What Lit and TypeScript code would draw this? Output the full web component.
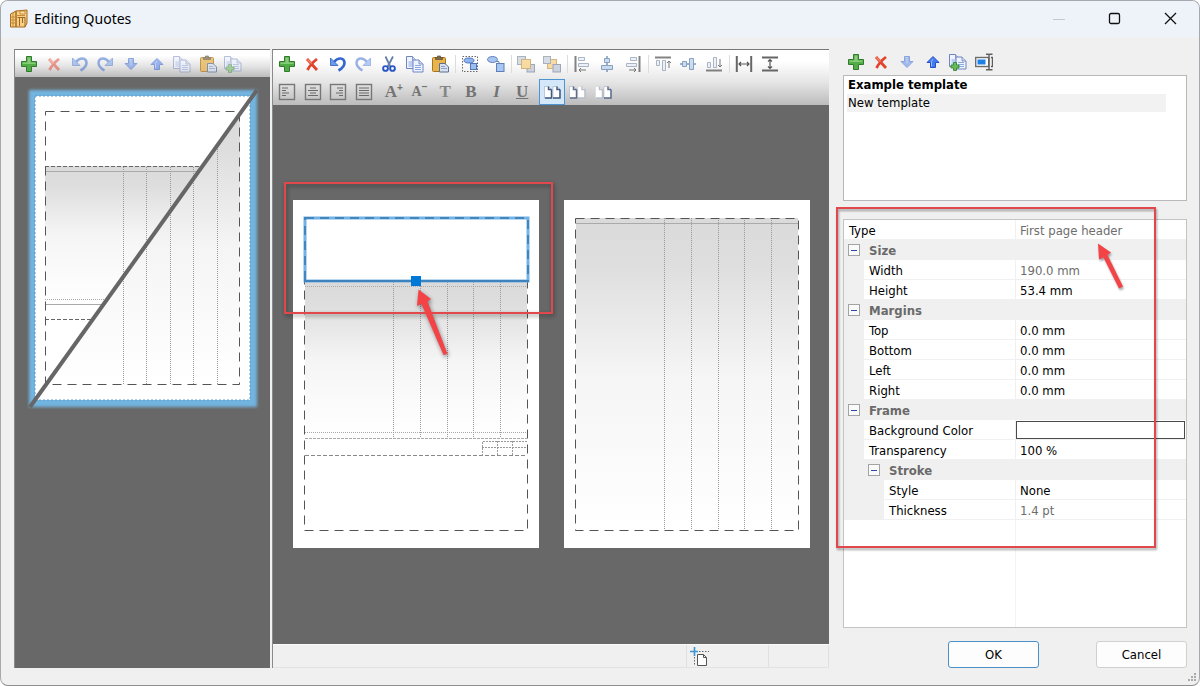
import { LitElement, html, css, svg, nothing } from "lit";
import { customElement, property, state } from "lit/decorators.js";
import { classMap } from "lit/directives/class-map.js";

const page = (x: number, y: number) => svg`
  <path d="M${x} ${y}h6l4 4v8h-10z" fill="#eef3ff" stroke="#6f86bd"/>
  <path d="M${x + 6} ${y}v4h4" fill="#c9d6f5" stroke="#6f86bd" stroke-width=".8"/>
  <path d="M${x + 2} ${y + 5.5}h6M${x + 2} ${y + 7.5}h6M${x + 2} ${y + 9.5}h6" stroke="#7f9fe0" stroke-width=".9"/>`;

const pagePair = (left: string, right: string) => svg`
  <path d="M1.500 3.500h4l3 3V15h-7z" fill="#fff" stroke="${left}" stroke-opacity=".35" stroke-width=".8"/>
  <path d="M2 15h6.500V6.500M5.500 3.500v3h3" fill="none" stroke="${left}" stroke-width="1.500"/>
  <path d="M10 3.500h4l3 3V15h-7z" fill="#fff" stroke="${right}" stroke-opacity=".35" stroke-width=".8"/>
  <path d="M10 15h7V6.500M14 3.500v3h3" fill="none" stroke="${right}" stroke-width="1.500"/>`;

const textBlock = (lines: string) => svg`
  <rect x="1.500" y="1.500" width="15" height="15" fill="none" stroke="#777" stroke-width="1.400"/>
  <path d="${lines}" stroke="#6a6a6a" stroke-width="1.200"/>`;

const icons: Record<string, unknown> = {
  add: svg`<path d="M6.500 1.500h5v5h5v5h-5v5h-5v-5h-5v-5h5z" fill="#52ad47" stroke="#2f7a2d"/><path d="M7.500 2.500h3v5h5v1.500h-13V7.500h5z" fill="#9bd78b" opacity=".75"/>`,
  remove: svg`<path d="M4 4l10 11M14 4C10 7 7 10 4.500 15" fill="none" stroke="#e2432c" stroke-width="2.800"/><path d="M4.500 4.500l4 4" stroke="#f58a72" stroke-width="1.200"/>`,
  undo: svg`<path d="M5 7C9 2 15 2.500 15.500 7.500c.2 3.500-2.500 6-6 8" fill="none" stroke="#3568cf" stroke-width="2.600"/><path d="M1.500 3v7.500h7.500z" fill="#6d9bea" stroke="#2d5dc0" stroke-width=".8"/>`,
  redo: svg`<path d="M13 7C9 2 3 2.500 2.500 7.500c-.2 3.500 2.500 6 6 8" fill="none" stroke="#3568cf" stroke-width="2.400"/><path d="M16.500 3v7.500h-7.500z" fill="#6d9bea" stroke="#2d5dc0" stroke-width=".8"/>`,
  down: svg`<path d="M6.500 3.500h5v5h3.500L9 14.500 3 8.500h3.500z" fill="#5585ea" stroke="#2b57c8"/><path d="M7.500 4.500h1.500v6" fill="none" stroke="#9dbcff"/>`,
  up: svg`<path d="M6.500 14.500h5v-5h3.500L9 3.500 3 9.500h3.500z" fill="#4479f0" stroke="#2450c4"/><path d="M7.500 13.500v-5L9 6" fill="none" stroke="#9dbcff"/>`,
  cut: svg`<path d="M5.500 1.500l5 10.500M13 1.500L7.500 12" stroke="#6880a8" stroke-width="1.800"/><circle cx="5.500" cy="13.500" r="2.400" fill="none" stroke="#2956c5" stroke-width="1.900"/><circle cx="12.500" cy="13.500" r="2.400" fill="none" stroke="#2956c5" stroke-width="1.900"/>`,
  copy: svg`${page(0.5, 1.5)}${page(7, 5)}`,
  paste: svg`<rect x="1.500" y="2.500" width="13" height="14" rx="1" fill="#e9b44c" stroke="#a87520"/><path d="M4.500 4.500V2.500h2V1h3v1.500h2v2z" fill="#7d6a4b" stroke="#5d4d33" stroke-width=".7"/><path d="M8.500 8.500h5.500l3.500 3.500v5h-9z" fill="#d7e0ef" stroke="#5d6f93"/><path d="M10 11.500h4M10 13.500h6" stroke="#8ea3cb"/>`,
  copyAdd: svg`${page(0.5, 1.5)}${page(7, 4)}<path d="M4.500 9.500h3v2.500H10v3H7.500v2.500h-3V15H2v-3h2.500z" fill="#67bd58" stroke="#2d8030" stroke-width=".8"/>`,
  rename: svg`<rect x=".700" y="4.500" width="13" height="9" fill="#fff" stroke="#6c6c6c" stroke-width="1.400"/><rect x="2.500" y="6.500" width="8" height="5" fill="#1c80e8"/><path d="M11 1.200h2.200q.8 0 .8 1v13.600q0 1-.8 1H11M17.500 1.200h-2.700q-.8 0-.8 1M17.500 16.800h-2.700q-.8 0-.8-1M16 4.500h1.500v9H16" fill="none" stroke="#5f5f5f" stroke-width="1.400"/>`,
  group: svg`<rect x="1.500" y="1.500" width="15" height="15" fill="none" stroke="#666" stroke-dasharray="1.500 1.500"/><ellipse cx="8" cy="5.500" rx="5" ry="2.500" fill="#8fb3ee" stroke="#5077b9"/><rect x="9.500" y="8.500" width="6" height="6" fill="#9dbdf0" stroke="#5077b9"/>`,
  ungroup: svg`<ellipse cx="5.500" cy="4.500" rx="5" ry="3" fill="#a9c6f3" stroke="#5c7fb9"/><path d="M9 6.500h3v2" fill="none" stroke="#6d87b0"/><rect x="9.500" y="8.500" width="7.500" height="8" fill="#a9c6f3" stroke="#5c7fb9"/>`,
  front: svg`<rect x=".500" y="1.500" width="8" height="8" fill="#c9d0dc" stroke="#8b94a5"/><rect x="10" y="9.500" width="7.500" height="7.500" fill="#bcc6d8" stroke="#7e8899"/><rect x="4.500" y="4.500" width="9" height="9" fill="#f8cf7f" stroke="#c09a54"/>`,
  back: svg`<rect x="4.500" y="4.500" width="9" height="9" fill="#f8cf7f" stroke="#c09a54"/><rect x=".500" y="1.500" width="7" height="7" fill="#c9d0dc" stroke="#8b94a5"/><rect x="10" y="9.500" width="7.500" height="7.500" fill="#bcc6d8" stroke="#7e8899"/>`,
  alignLeft: svg`<path d="M2.500 1v16" stroke="#555" stroke-width="2"/><path d="M5.500 2.500h6v3h-6zM5.500 8.500h10v3h-10z" fill="#e9eef6" stroke="#8a99b1"/><path d="M13 15H6M8 13l-2 2 2 2" fill="none" stroke="#444"/>`,
  alignCenter: svg`<path d="M9 1v16" stroke="#4c6f9f" stroke-width="1.500"/><path d="M6.500 3.500h5v4h-5zM3.500 10.500h11v4h-11z" fill="#b9d0ee" stroke="#5c7fae"/>`,
  alignRight: svg`<path d="M15.500 1v16" stroke="#555" stroke-width="2"/><path d="M6.500 2.500h6v3h-6zM2.500 8.500h10v3h-10z" fill="#e9eef6" stroke="#8a99b1"/><path d="M5 15h7M10 13l2 2-2 2" fill="none" stroke="#444"/>`,
  alignTop: svg`<path d="M1 2.500h16" stroke="#555" stroke-width="2"/><path d="M2.500 5.500h3v5h-3zM8.500 5.500h3v10h-3z" fill="#e9eef6" stroke="#8a99b1"/><path d="M15 13V6M13 8l2-2 2 2" fill="none" stroke="#444"/>`,
  alignMiddle: svg`<path d="M1 9h16" stroke="#4c6f9f" stroke-width="1.500"/><path d="M3.500 6.500h4v5h-4zM10.500 3.500h4v11h-4z" fill="#b9d0ee" stroke="#5c7fae"/>`,
  alignBottom: svg`<path d="M1 15.500h16" stroke="#555" stroke-width="2"/><path d="M2.500 7.500h3v5h-3zM8.500 2.500h3v10h-3z" fill="#e9eef6" stroke="#8a99b1"/><path d="M15 4v8M13 10l2 2 2-2" fill="none" stroke="#444"/>`,
  sameWidth: svg`<path d="M1.800 1v16M16.200 1v16" stroke="#666" stroke-width="2"/><path d="M4 9h10M6 7L4 9l2 2M12 7L14 9l-2 2" fill="none" stroke="#555" stroke-width="1.200"/>`,
  sameHeight: svg`<path d="M1 2.500h16M1 15.500h16" stroke="#666" stroke-width="2"/><path d="M9 4.500v9M7 6.500L9 4.500l2 2M7 11.500l2 2 2-2" fill="none" stroke="#555" stroke-width="1.200"/>`,
  textLeft: textBlock("M4 5h6M4 7.500h4M4 10h7M4 12.500h4"),
  textCenter: textBlock("M6 5h6M4 7.500h10M6 10h6M4 12.500h10"),
  textRight: textBlock("M8 5h6M10 7.500h4M7 10h7M10 12.500h4"),
  textJustify: textBlock("M4 5h10M4 7.500h10M4 10h10M4 12.500h10"),
  pagesBoth: pagePair("#43597f", "#43597f"),
  pagesFirst: pagePair("#5b6c8c", "#b9bec8"),
  pagesNext: pagePair("#b9bec8", "#5b6c8c"),
};

const icon = (name: string) => html`<svg class="icon" viewBox="0 0 18 18" aria-hidden="true">${icons[name]}</svg>`;

type Tool = { icon?: string; glyph?: string; sup?: string; style?: string; label: string; faded?: boolean; soft?: boolean };

const iconStyles = css`
  :host { display: block; }
  .icon { width: 18px; height: 18px; display: block; }
  button { font: inherit; color: inherit; margin: 0; padding: 0; border: 0; background: none; }
`;

@customElement("tool-group")
class ToolGroup extends LitElement {
  @property({ attribute: false }) tools: Tool[] = [];
  @property({ attribute: false }) active = "";
  static styles = [iconStyles, css`
    .group { display: grid; grid-auto-flow: column; grid-auto-columns: minmax(0, 1fr); align-items: center; height: 100%; }
    button { height: 26px; display: flex; align-items: center; justify-content: center; }
    .faded .icon { opacity: .5; }
    .soft .icon { opacity: .72; }
    .active { background: #d4e8fa; box-shadow: inset 0 0 0 1px #4c94d2; }
    .glyph { font: bold 17px/20px "Liberation Serif", serif; color: #737373; }
    .small { font-size: 14px; }
    .light { color: #868686; }
    .italic { font-style: italic; }
    .under { text-decoration: underline; }
    sup { font: bold 10px/8px "Liberation Sans", sans-serif; vertical-align: 6px; }
  `];
  render() {
    return html`<div class="group" role="group">${this.tools.map((t) => html`
      <button type="button" aria-label=${t.label} class=${classMap({ faded: !!t.faded, soft: !!t.soft, active: this.active === t.label })}>
        ${t.icon ? icon(t.icon) : html`<span class="glyph ${t.style ?? ""}">${t.glyph}${t.sup ? html`<sup>${t.sup}</sup>` : nothing}</span>`}
      </button>`)}</div>`;
  }
}

const columns = (xs: number[], y1: number, y2: number) =>
  xs.map((x) => svg`<path d="M${x} ${y1}V${y2}" stroke="#999" stroke-width="1" stroke-dasharray="1 1"/>`);

const fade = (id: string) => svg`
  <linearGradient id=${id} x1="0" y1="0" x2="0" y2="1">
    <stop offset="0" stop-color="#dadada"/><stop offset=".15" stop-color="#dedede"/>
    <stop offset=".5" stop-color="#f5f5f5"/><stop offset="1" stop-color="#fff"/>
  </linearGradient>`;

@customElement("template-thumbnail")
class TemplateThumbnail extends LitElement {
  static styles = css`
    :host { display: block; }
    svg { display: block; width: 232px; height: 322px; }
  `;
  render() {
    const xs = [96.5, 119.5, 143.5, 166.5, 190.5];
    return html`<svg viewBox="0 0 232 322" role="img" aria-label="Template thumbnail">
      <defs>
        ${fade("fade")}
        <filter id="soft"><feGaussianBlur stdDeviation="1.500"/></filter>
        <clipPath id="upper"><path d="M0 0H232L0 322z"/></clipPath>
        <clipPath id="lower"><path d="M232 0V322H0z"/></clipPath>
      </defs>
      <rect x="2" y="3" width="228" height="317" fill="#72b4e0" filter="url(#soft)"/>
      <rect x="8" y="9" width="215" height="304" fill="#fff" stroke="#5f9ac8" stroke-dasharray="2 2"/>
      <g clip-path="url(#upper)">
        <rect x="18" y="79" width="195" height="138" fill="url(#fade)"/>
        <path d="M18 79.500H213M18 232.500H213" stroke="#666" stroke-dasharray="4 2"/>
        <path d="M18 84.500H213M18 217.500H213" stroke="#aaa"/>
        <path d="M18 212.500H213" stroke="#aaa" stroke-dasharray="1 1"/>
        ${columns(xs, 80, 217)}
      </g>
      <g clip-path="url(#lower)">
        <rect x="18" y="24" width="195" height="274" fill="url(#fade)"/>
        ${columns(xs, 24, 298)}
      </g>
      <rect x="18.500" y="24.500" width="194" height="273" fill="none" stroke="#555" stroke-dasharray="9 6"/>
      <path d="M230 3L3 320" stroke="#666" stroke-width="4"/>
    </svg>`;
  }
}

@customElement("page-canvas")
class PageCanvas extends LitElement {
  static styles = css`
    :host { display: flex; align-items: center; justify-content: center; gap: 25px; padding-bottom: 2px; background: #686868; }
    .sheet { position: relative; }
    svg { display: block; }
    .paper { width: 246px; height: 348px; }
    .callout { position: absolute; left: -14px; top: -24px; width: 280px; height: 190px; overflow: visible; filter: drop-shadow(1px 2px 2px rgba(0,0,0,.45)); pointer-events: none; }
  `;
  render() {
    const xs = [100.5, 127.5, 154.5, 180.5, 207.5];
    return html`
      <div class="sheet">
        <svg class="paper" viewBox="0 0 246 348" role="img" aria-label="First page">
          <defs>${fade("fade")}</defs>
          <rect width="246" height="348" fill="#fff"/>
          <rect x="12" y="82" width="222" height="156" fill="url(#fade)"/>
          <path d="M12 86.500H234M12 232.500H234" stroke="#aaa" stroke-dasharray="1 1"/>
          <path d="M12 238.500H234" stroke="#aaa" stroke-dasharray="3 1"/>
          <path d="M12 255.500H234" stroke="#888" stroke-dasharray="4 2"/>
          ${columns(xs, 82, 238)}
          <path d="M189.500 256V241.500H234M204.500 241V256M219.500 241V256M189 247.500H234" fill="none" stroke="#999" stroke-dasharray="2 1"/>
          <rect x="11.500" y="17.500" width="223" height="313" fill="none" stroke="#555" stroke-dasharray="9 6"/>
          <rect x="12" y="18" width="223" height="63" fill="#fff" stroke="#72b2e4" stroke-width="3"/>
          <rect x="12" y="18" width="223" height="63" fill="none" stroke="#4286bd" stroke-width="2" stroke-dasharray="9 6"/>
          <path d="M11 81H236" stroke="#3e83bd" stroke-width="2"/>
          <rect x="118" y="76" width="10" height="10" fill="#0078d7"/>
        </svg>
        <svg class="callout" viewBox="0 0 280 190" aria-hidden="true">
          <rect x="6" y="7" width="267" height="130" fill="none" stroke="#e0484b" stroke-width="2"/>
          <path d="M139.500 113.500L138 130L142.500 128L164.500 179L168.500 178L148.500 125.500L152 123z" fill="#f44346"/>
        </svg>
      </div>
      <svg class="paper" viewBox="0 0 246 348" role="img" aria-label="Following page">
        <defs>${fade("fade2")}</defs>
        <rect width="246" height="348" fill="#fff"/>
        <rect x="12" y="18" width="222" height="312" fill="url(#fade2)"/>
        <path d="M12 23.500H234" stroke="#aaa"/>
        ${columns(xs, 18, 330)}
        <rect x="11.500" y="18.500" width="223" height="312" fill="none" stroke="#555" stroke-dasharray="9 6"/>
      </svg>`;
  }
}

type Row = { name: string; value?: string; level: number; section?: boolean; readonly?: boolean; swatch?: boolean };

const rows: Row[] = [
  { name: "Type", value: "First page header", level: 0, readonly: true },
  { name: "Size", level: 1, section: true },
  { name: "Width", value: "190.0 mm", level: 1, readonly: true },
  { name: "Height", value: "53.4 mm", level: 1 },
  { name: "Margins", level: 1, section: true },
  { name: "Top", value: "0.0 mm", level: 1 },
  { name: "Bottom", value: "0.0 mm", level: 1 },
  { name: "Left", value: "0.0 mm", level: 1 },
  { name: "Right", value: "0.0 mm", level: 1 },
  { name: "Frame", level: 1, section: true },
  { name: "Background Color", level: 1, swatch: true },
  { name: "Transparency", value: "100 %", level: 1 },
  { name: "Stroke", level: 2, section: true },
  { name: "Style", value: "None", level: 2 },
  { name: "Thickness", value: "1.4 pt", level: 2, readonly: true },
];

@customElement("property-grid")
class PropertyGrid extends LitElement {
  static styles = css`
    :host { display: flex; flex-direction: column; background: #fff; border: 1px solid #c4c4c4; position: relative; line-height: 17px; }
    table { width: 100%; border-collapse: separate; border-spacing: 0; table-layout: fixed; }
    .names { width: 172px; }
    th, td { height: 20px; padding: 0; box-sizing: border-box; text-align: left; font-weight: normal; white-space: nowrap; }
    .name { display: flex; height: 20px; box-sizing: border-box; }
    .gutter { flex: none; width: 20px; background: #f0f0f0; display: flex; align-items: center; justify-content: center; }
    .label { flex: 1; padding: 2px 0 0 5px; border-bottom: 1px solid #f0f0f0; border-right: 1px solid #f0f0f0; }
    td { padding: 2px 0 0 4px; border-bottom: 1px solid #f0f0f0; }
    .section { background: #f0f0f0; }
    .section .label { font-weight: bold; color: #6a6a6a; }
    .readonly { color: #6d6d6d; }
    .swatch-cell { padding: 0 1px 0 0; }
    .swatch { display: block; width: 100%; height: 18px; padding: 0; background: #fff; border: 1px solid #4a4a4a; border-radius: 0; }
    .toggle { width: 12px; height: 12px; padding: 0; border: 1px solid #a3a3a3; border-radius: 0; background: #fafafa; display: flex; align-items: center; justify-content: center; }
    .bar { width: 6px; height: 1px; background: #2a4ba0; }
    .rest { flex: 1; width: 171px; border-right: 1px solid #f4f4f4; }
    .callout { position: absolute; left: -12px; top: -18px; width: 330px; height: 352px; filter: drop-shadow(1px 2px 1px rgba(0,0,0,.35)); pointer-events: none; }
  `;
  render() {
    return html`
      <table aria-label="Properties">
        <colgroup><col class="names"><col></colgroup>
        <tbody>${rows.map((r) => r.section
          ? html`<tr class="section"><th colspan="2" scope="rowgroup"><div class="name">
              ${r.level > 1 ? html`<span class="gutter"></span>` : nothing}
              <span class="gutter"><button class="toggle" type="button" aria-label="Collapse ${r.name}" aria-expanded="true"><span class="bar"></span></button></span>
              <span class="label">${r.name}</span></div></th></tr>`
          : html`<tr><th scope="row"><div class="name">
              ${Array.from({ length: r.level }, () => html`<span class="gutter"></span>`)}
              <span class="label">${r.name}</span></div></th>
              <td class=${classMap({ readonly: !!r.readonly, "swatch-cell": !!r.swatch })}>${r.swatch
                ? html`<button class="swatch" type="button" aria-label="Background Color"></button>` : r.value}</td></tr>`)}
        </tbody>
      </table>
      <div class="rest"></div>
      <svg class="callout" viewBox="0 0 330 352" aria-hidden="true">
        <rect x="5" y="6" width="318" height="339" fill="none" stroke="#e0484b" stroke-width="2"/>
        <path d="M266 41.500L267 57.500L271.500 55.500L287 86.500L291 84.500L275.500 53L279 50.500z" fill="#f44346"/>
      </svg>`;
  }
}

const leftTools: Tool[] = [
  { icon: "add", label: "Add" },
  { icon: "remove", label: "Delete", faded: true }, { icon: "undo", label: "Undo", faded: true },
  { icon: "redo", label: "Redo", faded: true }, { icon: "down", label: "Move down", faded: true },
  { icon: "up", label: "Move up", faded: true }, { icon: "copy", label: "Copy", faded: true },
  { icon: "paste", label: "Paste", soft: true }, { icon: "copyAdd", label: "Duplicate", faded: true },
];
const editTools: Tool[] = [
  { icon: "add", label: "Add" }, { icon: "remove", label: "Delete" }, { icon: "undo", label: "Undo" },
  { icon: "redo", label: "Redo", faded: true }, { icon: "cut", label: "Cut" }, { icon: "copy", label: "Copy" }, { icon: "paste", label: "Paste" },
];
const groupTools: Tool[] = [{ icon: "group", label: "Group" }, { icon: "ungroup", label: "Ungroup" }];
const orderTools: Tool[] = [{ icon: "front", label: "Bring to front", soft: true }, { icon: "back", label: "Send to back", soft: true }];
const alignH: Tool[] = [
  { icon: "alignLeft", label: "Align left", soft: true }, { icon: "alignCenter", label: "Align center", soft: true }, { icon: "alignRight", label: "Align right", soft: true },
];
const alignV: Tool[] = [
  { icon: "alignTop", label: "Align top", soft: true }, { icon: "alignMiddle", label: "Align middle", soft: true }, { icon: "alignBottom", label: "Align bottom", soft: true },
];
const sizeTools: Tool[] = [{ icon: "sameWidth", label: "Same width" }, { icon: "sameHeight", label: "Same height" }];
const paragraphTools: Tool[] = [
  { icon: "textLeft", label: "Text left" }, { icon: "textCenter", label: "Text center" },
  { icon: "textRight", label: "Text right" }, { icon: "textJustify", label: "Justify" },
];
const fontTools: Tool[] = [
  { glyph: "A", sup: "+", label: "Larger text" }, { glyph: "A", sup: "−", style: "small", label: "Smaller text" },
  { glyph: "T", style: "light", label: "Font" }, { glyph: "B", label: "Bold" },
  { glyph: "I", style: "italic", label: "Italic" }, { glyph: "U", style: "under", label: "Underline" },
];
const viewTools: Tool[] = [
  { icon: "pagesBoth", label: "All pages" }, { icon: "pagesFirst", label: "First page only" }, { icon: "pagesNext", label: "Following pages" },
];
const templateTools: Tool[] = [
  { icon: "add", label: "Add template" }, { icon: "remove", label: "Delete template" },
  { icon: "down", label: "Move template down", faded: true }, { icon: "up", label: "Move template up" },
  { icon: "copyAdd", label: "Duplicate template" }, { icon: "rename", label: "Rename template" },
];

@customElement("app-root")
class AppRoot extends LitElement {
  @state() private selected = "Example template";
  static styles = [iconStyles, css`
    :host { display: block; font: 13px/18px "DejaVu Sans Condensed", "Noto Sans", sans-serif; color: #000; background: #fff; }
    .dialog { min-height: 100vh; box-sizing: border-box; display: flex; flex-direction: column; background: #f0f0f0; border: 1px solid #a5a9ae; border-bottom-color: #8f8f8f; border-radius: 8px; overflow: hidden; }
    .title-bar { display: flex; align-items: center; height: 36px; padding-left: 8px; background: #eef3fa; }
    .logo { width: 20px; height: 20px; margin-right: 5px; }
    h1 { flex: 1; margin: 0; font: 14px/20px "Noto Sans", sans-serif; }
    .caption { width: 56px; height: 34px; display: flex; align-items: center; justify-content: center; }
    .caption svg { width: 14px; height: 14px; }
    .body { flex: 1; display: grid; grid-template-columns: 256px minmax(0, 1fr) 344px; padding: 12px 12px 17px 13px; }
    .pane { display: flex; flex-direction: column; border-top: 1px solid #777; border-left: 1px solid #8a8a8a; }
    .list-pane { background: #686868; }
    .list-pane template-thumbnail { margin: 10px 0 0 12px; }
    .editor { margin: 0 14px 0 2px; background: #f0f0f0; }
    .bar { background: linear-gradient(#fff 20%, #e4e4e4 60%, #bcbcbc); }
    .row { display: flex; height: 27px; }
    .row + .row { padding-top: 1px; }
    .pane .row { padding-left: 1px; }
    .sep { width: 4px; display: flex; align-items: center; justify-content: center; }
    .sep::before { content: ""; width: 1px; height: 18px; background: #dcdcdc; }
    .gap { width: 4px; }
    .w9 { width: 230px; } .w7 { width: 179px; } .w6 { width: 154px; } .w4 { width: 103px; } .w3 { width: 77px; } .w2 { width: 52px; }
    page-canvas { flex: 1; min-height: 420px; }
    .status { display: flex; height: 22px; border-top: 1px solid #fafafa; border-bottom: 1px solid #e2e2e2; }
    .cell { box-sizing: border-box; border-right: 1px solid #e0e0e0; }
    .cell.wide { flex: 1; }
    .cell.origin { width: 82px; padding: 1px 3px; }
    .cell.zoom { width: 60px; }
    .origin svg { width: 19px; height: 20px; display: block; }
    .side { display: flex; flex-direction: column; }
    .side .row { height: 26px; }
    .templates { list-style: none; margin: 0 0 18px; padding: 0 20px 0 3px; height: 124px; background: #fff; border: 1px solid #b8b8b8; }
    .templates li { padding-left: 1px; }
    .templates .current { font-weight: bold; }
    .templates .hover { background: #f2f2f2; }
    property-grid { flex: 1; }
    .actions { display: flex; justify-content: flex-end; gap: 57px; padding-top: 13px; }
    .action { width: 91px; height: 27px; background: #fdfdfd; border: 1px solid #d0d0d0; border-radius: 3px; }
    .primary { border-color: #4a90c8; }
    .grip { position: absolute; right: 3px; bottom: 3px; width: 10px; height: 10px; }
    .frame { position: relative; }
  `];
  render() {
    return html`<div class="frame"><main class="dialog">
      <header class="title-bar">
        <svg class="logo" viewBox="0 0 20 20" aria-hidden="true">
          <path d="M1.500 5L7 2v16H1.500zM7 2l11-1v13l-2 4H7z" fill="#f9d083" stroke="#a56a1f"/>
          <path d="M1.500 8H7M1.500 11H7M1.500 14H7M7 6.500h9M4 4v14" stroke="#c48b3c" fill="none"/>
          <path d="M8.500 8.500h7.500V18M10.500 9v8M13.500 9v5" stroke="#9a6828" fill="none"/>
          <path d="M11 2l5 0v3h-5z" fill="#ffe3a5" stroke="#b97b2b" stroke-width=".8"/>
        </svg>
        <h1>Editing Quotes</h1>
        <button class="caption" type="button" aria-label="Minimize" disabled><svg viewBox="0 0 14 14"><path d="M1 7.500h12" stroke="#c5c8cc"/></svg></button>
        <button class="caption" type="button" aria-label="Maximize"><svg viewBox="0 0 14 14"><rect x="1.500" y="1.500" width="10" height="10" rx="1.500" fill="none" stroke="#111" stroke-width="1.300"/></svg></button>
        <button class="caption" type="button" aria-label="Close"><svg viewBox="0 0 14 14"><path d="M1 1l11 11M12 1L1 12" stroke="#111" stroke-width="1.300"/></svg></button>
      </header>
      <div class="body">
        <section class="pane list-pane">
          <div class="bar"><div class="row"><tool-group class="w9" .tools=${leftTools}></tool-group></div></div>
          <template-thumbnail></template-thumbnail>
        </section>
        <section class="pane editor">
          <div class="bar">
            <div class="row">
              <tool-group class="w7" .tools=${editTools}></tool-group><span class="sep"></span>
              <tool-group class="w2" .tools=${groupTools}></tool-group><span class="sep"></span>
              <tool-group class="w2" .tools=${orderTools}></tool-group><span class="sep"></span>
              <tool-group class="w3" .tools=${alignH}></tool-group><span class="sep"></span>
              <tool-group class="w3" .tools=${alignV}></tool-group><span class="sep"></span>
              <tool-group class="w2" .tools=${sizeTools}></tool-group>
            </div>
            <div class="row">
              <tool-group class="w4" .tools=${paragraphTools}></tool-group><span class="gap"></span>
              <tool-group class="w6" .tools=${fontTools}></tool-group><span class="gap"></span>
              <tool-group class="w3" .tools=${viewTools} .active=${"All pages"}></tool-group>
            </div>
          </div>
          <page-canvas></page-canvas>
          <div class="status">
            <div class="cell wide"></div>
            <div class="cell origin"><svg viewBox="0 0 19 20" aria-hidden="true">
              <path d="M0 5.500h8M4.500 1v9" stroke="#3c93d2" stroke-width="1.600"/>
              <path d="M9 5.500h10M4.500 11v9" stroke="#666" stroke-dasharray="1.500 1.500"/>
              <path d="M7.500 8.500h6l3 3v8h-9z" fill="#fff" stroke="#555"/><path d="M13.500 8.500v3h3" fill="none" stroke="#555"/>
            </svg></div>
            <div class="cell zoom"></div>
          </div>
        </section>
        <aside class="side">
          <div class="row"><tool-group class="w6" .tools=${templateTools}></tool-group></div>
          <ul class="templates" role="listbox" aria-label="Templates">
            ${["Example template", "New template"].map((name) => html`
              <li role="option" aria-selected=${this.selected === name ? "true" : "false"}
                class=${this.selected === name ? "current" : "hover"}>${name}</li>`)}
          </ul>
          <property-grid></property-grid>
          <div class="actions">
            <button class="action primary" type="button">OK</button>
            <button class="action" type="button">Cancel</button>
          </div>
        </aside>
      </div>
    </main>
    <svg class="grip" viewBox="0 0 10 10" aria-hidden="true"><path d="M7 1h2M4 4h2M7 4h2M1 7h2M4 7h2M7 7h2" stroke="#aaa" stroke-width="2"/></svg>
    </div>`;
  }
}
